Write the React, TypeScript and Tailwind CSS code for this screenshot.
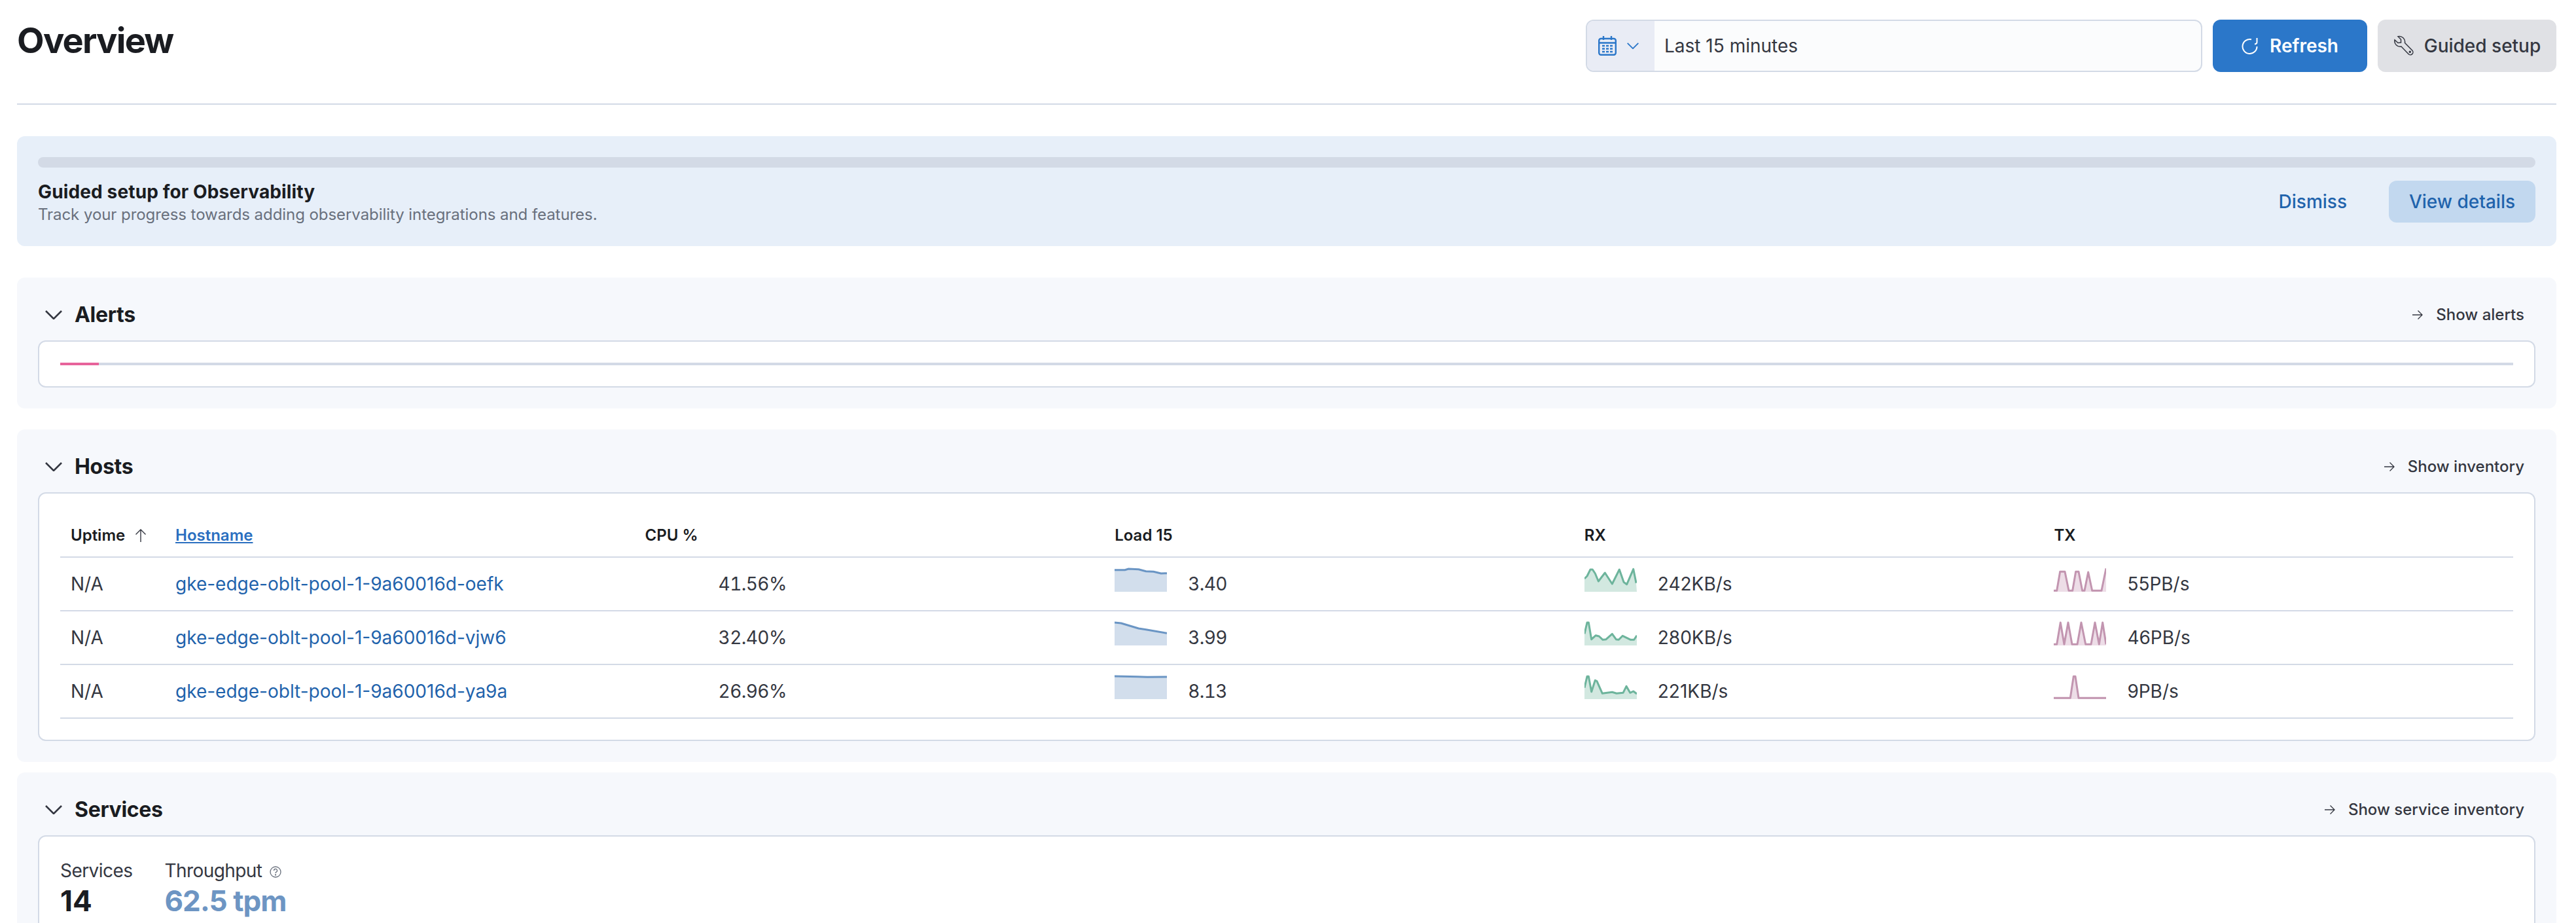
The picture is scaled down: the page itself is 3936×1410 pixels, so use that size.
import React from 'react';

type Row = {
  host: string;
  cpu: string;
  load: string;
  loadLine: string;
  rx: string;
  rxLine: string;
  tx: string;
  txLine: string;
};

const rows: Row[] = [
  {
    host: 'gke-edge-oblt-pool-1-9a60016d-oefk',
    cpu: '41.56%',
    load: '3.40',
    loadLine: '0,6.7 15.7,6.7 21.4,5 36.7,5.7 48,8.7 59.5,9.3 71,12 80,11.7',
    rx: '242KB/s',
    rxLine: '0,20 4,16 9,6 12.3,6 16.3,12 21.3,24 31.3,11 42.3,28 53.3,6 60,25.3 64.7,28.7 74.7,5.3 79,26.7',
    tx: '55PB/s',
    txLine: '0,38.3 4.7,38.3 9.7,9.3 17,9.3 23,38.3 28.7,38.3 33.7,9.3 38,9.3 43.7,38.3 47,38.3 52.7,10 58.7,38.3 73,38.3 80,4.3',
  },
  {
    host: 'gke-edge-oblt-pool-1-9a60016d-vjw6',
    cpu: '32.40%',
    load: '3.99',
    loadLine: '0,5 10,6 36.7,14 48,15.7 80,21.3',
    rx: '280KB/s',
    rxLine: '0,22.3 4,5 6.3,5 10.7,30.7 17.3,24.7 22.3,26 28,31.3 33,30.7 42.3,22.3 48.3,30.7 52.3,31.3 58.3,25.3 70.7,31.3 75.7,31.3 80,24.7',
    tx: '46PB/s',
    txLine: '0,38.3 4.7,38.3 10.3,5 16,38.3 22,5 28,38.3 36,38.3 42,5 48.7,38.3 57,38.3 63,5 69.3,38.3 74.7,5 80,38.3',
  },
  {
    host: 'gke-edge-oblt-pool-1-9a60016d-ya9a',
    cpu: '26.96%',
    load: '8.13',
    loadLine: '0,5 35,5.7 50,6.3 80,6',
    rx: '221KB/s',
    rxLine: '0,22.7 4,5.3 6.3,5.3 10.7,28.7 16.3,11.3 19,12.7 27.3,31.3 42.3,29.3 49,31.3 59,30.3 64,20.3 69.7,30.3 74.7,28 80,32',
    tx: '9PB/s',
    txLine: '0,38.3 25.3,38.3 30.3,5.3 33,5.3 38,38.3 80,38.3',
  },
];

function Sparkline({ line, stroke, fill }: { line: string; stroke: string; fill: string }) {
  return (
    <svg width="80" height="40" viewBox="0 0 80 40" className="mb-4 shrink-0">
      <polygon points={`0,40 ${line} 80,40`} fill={fill} />
      <polyline points={line} fill="none" stroke={stroke} strokeWidth="3" strokeLinejoin="round" />
    </svg>
  );
}

function ChevronDown({ className }: { className: string }) {
  return (
    <svg viewBox="0 0 26 14" fill="none" stroke="currentColor" strokeWidth="2.6" className={className}>
      <path d="M1 1 13 13 25 1" />
    </svg>
  );
}

function ArrowRight() {
  return (
    <svg width="16" height="16" viewBox="0 0 16 16" fill="none" stroke="#343741" strokeWidth="1.3">
      <path d="M0 8h15M8.5 1.5 15 8l-6.5 6.5" />
    </svg>
  );
}

function Panel({ title, link, children }: { title: string; link: string; children: React.ReactNode }) {
  return (
    <section className="rounded-[12px] bg-[#f6f8fc] px-[32px] pt-[32px] pb-[32px]">
      <div className="mb-[16px] flex h-[48px] items-center justify-between pt-[1px]">
        <div className="flex items-center pl-[11px]">
          <ChevronDown className="h-[14px] w-[26px] text-[#343741]" />
          <h2 className="ml-[19px] text-[32px] leading-[40px] font-bold tracking-[-0.01em] text-[#1a1c21]">{title}</h2>
        </div>
        <a className="flex items-center gap-[20px] pr-[17px] text-[24px] font-medium text-[#343741]">
          <ArrowRight />
          {link}
        </a>
      </div>
      {children}
    </section>
  );
}

function HostsTable() {
  const th = 'border-b-2 border-[#d3dae6] px-[16px] text-left text-[24px] font-semibold text-[#1a1c21]';
  const td = 'h-[82px] border-b-2 border-[#d3dae6] px-[16px] text-[28px]';
  return (
    <table className="w-full table-fixed border-separate border-spacing-0">
      <thead>
        <tr className="h-[66px]">
          <th className={`${th} w-[160px]`}>
            <span className="flex items-center gap-[14px]">
              Uptime
              <svg width="20" height="20" viewBox="0 0 20 20" fill="none" stroke="#343741" strokeWidth="1.4">
                <path d="M10 20V1M2.5 8.5 10 1l7.5 7.5" />
              </svg>
            </span>
          </th>
          <th className={th}>
            <span className="text-[#2a6fc0] underline underline-offset-2">Hostname</span>
          </th>
          <th className={th}>CPU %</th>
          <th className={th}>Load 15</th>
          <th className={th}>RX</th>
          <th className={th}>TX</th>
        </tr>
      </thead>
      <tbody className="text-[#343741]">
        {rows.map((r) => (
          <tr key={r.host}>
            <td className={td}>N/A</td>
            <td className={td}>
              <a className="text-[#1f63ac]">{r.host}</a>
            </td>
            <td className={td}>
              <div className="flex items-center gap-[32px] tracking-[-0.02em] tabular-nums">
                <div className="w-[80px]" />
                {r.cpu}
              </div>
            </td>
            <td className={td}>
              <div className="flex items-center gap-[32px] tracking-[-0.02em] tabular-nums">
                <Sparkline line={r.loadLine} stroke="#6a95c4" fill="#d2deec" />
                {r.load}
              </div>
            </td>
            <td className={td}>
              <div className="flex items-center gap-[32px]">
                <Sparkline line={r.rxLine} stroke="#6db49c" fill="#d2e8e0" />
                {r.rx}
              </div>
            </td>
            <td className={td}>
              <div className="flex items-center gap-[32px]">
                <Sparkline line={r.txLine} stroke="#c295b0" fill="#eddde7" />
                {r.tx}
              </div>
            </td>
          </tr>
        ))}
      </tbody>
    </table>
  );
}

export default function App() {
  return (
    <div className="h-[1410px] overflow-hidden bg-white pr-[30px] pl-[26px] font-['Inter',sans-serif] text-[#343741]">
      <header className="flex h-[158px] items-start justify-between pt-[30px]">
        <h1 className="text-[54px] leading-[64px] font-bold tracking-[-0.032em] text-[#1a1c21]">Overview</h1>
        <div className="flex h-[80px] gap-[16px]">
          <div className="flex w-[942px] overflow-hidden rounded-[12px] border-2 border-[#d3dae6] bg-[#fbfcfd]">
            <div className="flex w-[103px] items-center gap-[16px] bg-[#e9ecf5] pl-[17px]">
              <svg width="28" height="30" viewBox="0 0 28 30" fill="none" stroke="#2b77c9" strokeWidth="2.4">
                <rect x="1.2" y="4" width="25.6" height="24.8" rx="3" />
                <path d="M1 10.5h26M8 0v6M20 0v6" />
                <path d="M6 15h4M12 15h4M18 15h4M6 19.5h4M12 19.5h4M18 19.5h4M6 24h4M12 24h4M18 24h4" strokeWidth="2.4" />
              </svg>
              <ChevronDown className="h-[10px] w-[18px] text-[#2b77c9]" />
            </div>
            <div className="flex items-center pl-[15px] text-[28px]">Last 15 minutes</div>
          </div>
          <button className="flex w-[236px] items-center justify-center gap-[18px] rounded-[12px] bg-[#2b77c9] text-[28px] font-semibold text-white">
            <svg width="25" height="25" viewBox="0 0 25 25" fill="none" stroke="currentColor" strokeWidth="2">
              <path d="M15 2.3A11 11 0 1 0 23.5 13" />
              <path d="M23.5 0v6.5Q23.5 9 20 9.5" />
            </svg>
            Refresh
          </button>
          <button className="flex w-[273px] items-center justify-center gap-[15px] rounded-[12px] bg-[#e0e1e5] text-[28px] font-medium text-[#343741]">
            <svg width="32" height="32" viewBox="0 0 32 32" fill="none" stroke="currentColor" strokeWidth="1.5">
              <path d="M7 1.8 11.5 6.3V11L7 11.5 2 7A8.5 8.5 0 0 0 12 17L23 28.5A3.5 3.5 0 0 0 28.8 23L17.5 11.5A8.5 8.5 0 0 0 7 1.8Z" />
              <circle cx="25.3" cy="25.3" r="1" fill="currentColor" />
            </svg>
            Guided setup
          </button>
        </div>
      </header>
      <hr className="h-[2px] border-0 bg-[#d3dae6]" />

      <section className="mt-[48px] h-[168px] rounded-[12px] bg-[#e7eff9] px-[32px] pt-[32px]">
        <div className="h-[16px] rounded-full bg-[#d3dae6]" />
        <div className="mt-[18px] flex items-center justify-between">
          <div>
            <div className="text-[28px] leading-[38px] font-bold tracking-[0.005em] text-[#1a1c21]">Guided setup for Observability</div>
            <div className="text-[24px] leading-[32px] tracking-[-0.0025em] text-[#69707d]">
              Track your progress towards adding observability integrations and features.
            </div>
          </div>
          <div className="mb-[2px] flex items-center gap-[64px] text-[28px] font-medium text-[#1f63ac]">
            <span>Dismiss</span>
            <span className="flex h-[64px] w-[224px] items-center justify-center rounded-[12px] bg-[#c2d8ef]">View details</span>
          </div>
        </div>
      </section>

      <div className="mt-[48px]">
        <Panel title="Alerts" link="Show alerts">
          <div className="flex h-[72px] items-center rounded-[12px] border-2 border-[#d3dae6] bg-white px-[32px]">
            <div className="h-[4px] w-full bg-[#d3dae6]">
              <div className="h-[4px] w-[59px] bg-[#e7639b]" />
            </div>
          </div>
        </Panel>
      </div>

      <div className="mt-[32px]">
        <Panel title="Hosts" link="Show inventory">
          <div className="rounded-[12px] border-2 border-[#d3dae6] bg-white p-[32px]">
            <HostsTable />
          </div>
        </Panel>
      </div>

      <div className="mt-[16px]">
        <Panel title="Services" link="Show service inventory">
          <div className="h-[300px] rounded-[12px] border-2 border-[#d3dae6] bg-white p-[32px]">
            <div className="flex gap-[49px]">
              <div>
                <div className="text-[28px] leading-[40px] tracking-[-0.02em]">Services</div>
                <div className="text-[44px] leading-[52px] font-bold text-[#1a1c21]">14</div>
              </div>
              <div>
                <div className="flex items-center gap-[12px] text-[28px] leading-[40px] tracking-[-0.02em]">
                  Throughput
                  <svg width="18" height="18" viewBox="0 0 18 18" fill="none" stroke="#69707d" strokeWidth="1.3" className="mt-[4px]">
                    <circle cx="9" cy="9" r="8" />
                    <path d="M6.5 7a2.5 2.5 0 1 1 3.6 2.2c-.8.4-1.1.9-1.1 1.8" />
                    <circle cx="9" cy="13.5" r=".5" />
                  </svg>
                </div>
                <div className="text-[44px] leading-[52px] font-bold tracking-[-0.02em] text-[#6d95c3]">62.5 tpm</div>
              </div>
            </div>
          </div>
        </Panel>
      </div>
    </div>
  );
}
